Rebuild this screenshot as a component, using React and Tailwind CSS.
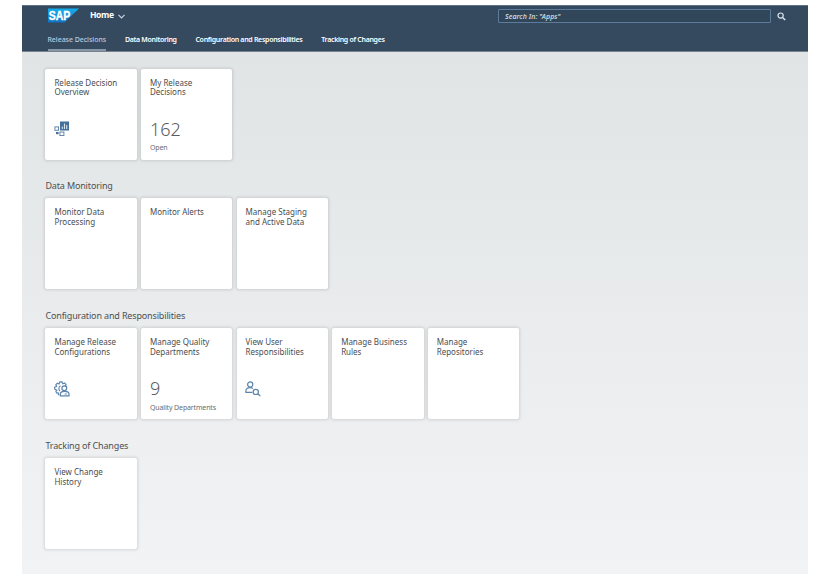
const tabs = [
  { label: 'Release Decisions', active: true },
  { label: 'Data Monitoring' },
  { label: 'Configuration and Responsibilities' },
  { label: 'Tracking of Changes' },
];

const groups = [
  {
    tiles: [
      { title: ['Release Decision', 'Overview'], icon: OverviewIcon },
      { title: ['My Release', 'Decisions'], value: 162, unit: 'Open' },
    ],
  },
  {
    name: 'Data Monitoring',
    tiles: [
      { title: ['Monitor Data', 'Processing'] },
      { title: ['Monitor Alerts'] },
      { title: ['Manage Staging', 'and Active Data'] },
    ],
  },
  {
    name: 'Configuration and Responsibilities',
    tiles: [
      { title: ['Manage Release', 'Configurations'], icon: ConfigIcon },
      { title: ['Manage Quality', 'Departments'], value: 9, unit: 'Quality Departments' },
      { title: ['View User', 'Responsibilities'], icon: UserSearchIcon },
      { title: ['Manage Business', 'Rules'] },
      { title: ['Manage', 'Repositories'] },
    ],
  },
  {
    name: 'Tracking of Changes',
    tiles: [{ title: ['View Change', 'History'] }],
  },
];

function SapLogo() {
  return (
    <svg className="-mt-px" width="31" height="15" viewBox="0 0 31 15">
      <defs>
        <linearGradient id="sap" x1="0" y1="0" x2="0" y2="1">
          <stop offset="0" stopColor="#12b0ee" />
          <stop offset="1" stopColor="#1273c4" />
        </linearGradient>
      </defs>
      <path d="M0 0.5H31L16.5 14.5H0Z" fill="url(#sap)" />
      <text
        x="0.8"
        y="11.7"
        textLength="21.5"
        lengthAdjust="spacingAndGlyphs"
        fill="#fff"
        stroke="#fff"
        strokeWidth="0.4"
        fontFamily="Liberation Sans, sans-serif"
        fontWeight="700"
        fontSize="12"
      >
        SAP
      </text>
    </svg>
  );
}

function OverviewIcon() {
  return (
    <svg width="16" height="16" viewBox="0 0 16 16" fill="none" stroke="#6486a8">
      <rect x="6" y="0.5" width="9" height="9" fill="#44719c" stroke="none" />
      <path d="M8.3 8V5.5M10.5 8V2.5M12.7 8V4" stroke="#d5e1ec" strokeWidth="1.1" />
      <rect x="0.9" y="5.9" width="3.6" height="3.4" strokeWidth="1" />
      <rect x="5.9" y="11" width="4" height="3.5" strokeWidth="1" />
      <path d="M2 11H4.6V13.2H2Z" fill="#44719c" stroke="none" />
    </svg>
  );
}

function ConfigIcon() {
  return (
    <svg width="16" height="16" viewBox="0 0 16 16" fill="none" stroke="#5d84ab">
      <path
        d="M5.4 13.9L4.4 13.5L4.3 11.9L2.6 12L1.9 10.4L2.9 9.2L0.7 8.2V6.2L2.6 5.5L1.9 3.6L3.4 2.2L5 3L5.9 0.9H8L8.8 2.8L10.5 2L12 3.4L11.4 4.9L13 5.8"
        strokeWidth="1.2"
      />
      <path d="M6 10A3.1 3.1 0 0 1 6.6 4.8" strokeWidth="1.1" />
      <circle cx="10.3" cy="7.3" r="2.4" strokeWidth="1.2" />
      <path d="M6.4 14.8V13C6.4 11.2 8 10.3 10.6 10.3S15 11.2 15 13V14.8Z" strokeWidth="1.2" />
      <path d="M10.6 13H13" strokeWidth="0.9" />
    </svg>
  );
}

function UserSearchIcon() {
  return (
    <svg className="-ml-px" width="16" height="16" viewBox="0 0 16 16" fill="none" stroke="#5d84ab" strokeWidth="1.2">
      <circle cx="5.2" cy="3.4" r="2.6" />
      <path d="M7.4 11.3H0.9V9.8C0.9 7.9 2.4 6.7 5 6.7C6.2 6.7 7.2 6.9 8 7.4" />
      <circle cx="10.8" cy="10.9" r="2.6" />
      <path d="M12.6 12.7L15.4 15" />
    </svg>
  );
}

function Header() {
  return (
    <header className="flex h-[47px] flex-col border-t border-b border-t-[#5c7184] border-b-[#77838f] bg-[#354a5f] text-white">
      <div className="flex h-[20px] items-center pl-[25.5px]">
        <SapLogo />
        <span className="-mt-px ml-[11.5px] w-[27.5px] text-[8.5px] leading-none font-bold tracking-[-0.4px] whitespace-nowrap">
          Home
        </span>
        <svg className="mt-px" width="7" height="5" viewBox="0 0 7 5" fill="none" stroke="#c7d6e5">
          <path d="M0.5 0.8L3.5 3.8L6.5 0.8" strokeWidth="1.2" />
        </svg>
        <div className="ml-auto flex h-[14px] w-[273px] items-center rounded-[1px] border border-[#5b7c9d] bg-[#32465a] pl-[6px] text-[7px] leading-none font-medium tracking-[0.1px] text-[#dbe4ec] italic">
          Search In: "Apps"
        </div>
        <svg className="mr-[22px] ml-[6px]" width="9" height="9" viewBox="0 0 9 9" fill="none" stroke="#dce9f5">
          <circle cx="3.6" cy="3.6" r="2.6" strokeWidth="1.2" />
          <path d="M5.5 5.5L8.2 8" strokeWidth="1.5" />
        </svg>
      </div>
      <nav className="flex flex-1 gap-[18.8px] pl-[25.5px] text-[7px] leading-none whitespace-nowrap">
        {tabs.map((tab) => (
          <a
            key={tab.label}
            className={
              tab.active
                ? 'border-b-2 border-[#8796a6] pt-[10px] font-medium tracking-[-0.05px] text-[#b6cbe0]'
                : 'border-b-2 border-transparent pt-[10px] font-semibold tracking-[-0.3px]'
            }
          >
            {tab.label}
          </a>
        ))}
      </nav>
    </header>
  );
}

function Tile({ title, value, unit, icon: Icon }) {
  return (
    <div className="flex h-[91px] w-[91.4px] flex-col rounded-[2px] bg-white pl-[9px] shadow-[0_0_3px_0.5px_rgba(0,0,0,0.12)]">
      <h3 className="h-[51px] pt-[9px] text-[8px] leading-[9.7px] whitespace-nowrap text-[#4a4d50]">
        {title.map((line) => (
          <span key={line} className="block">
            {line}
          </span>
        ))}
      </h3>
      {Icon && (
        <div className="pt-[1.5px]">
          <Icon />
        </div>
      )}
      {value && (
        <>
          <div className="h-[22px] text-[18px] leading-[18px] font-light text-[#5a5d60]">{value}</div>
          <div className="pt-[1.6px] text-[7px] leading-[10px] tracking-[-0.14px] whitespace-nowrap text-[#6a6d70]">{unit}</div>
        </>
      )}
    </div>
  );
}

export default function App() {
  return (
    <div className="h-[580px] w-[830px] overflow-hidden bg-white pt-[5px] pl-[22px] font-['Noto_Sans',sans-serif]">
      <div className="h-[569px] w-[786px] bg-linear-to-b from-[#dfe3e4] to-[#f2f3f5]">
        <Header />
        <main className="flex flex-col pt-[16.5px] pl-[23.4px]">
          {groups.map((group, i) => (
            <section key={i}>
              {group.name && (
                <h2 className="h-[38.8px] pt-[20.8px] text-[9px] leading-[12px] tracking-[-0.15px] text-[#4d5052]">
                  {group.name}
                </h2>
              )}
              <div className="flex gap-[4.2px]">
                {group.tiles.map((tile) => (
                  <Tile key={tile.title.join(' ')} {...tile} />
                ))}
              </div>
            </section>
          ))}
        </main>
      </div>
    </div>
  );
}
